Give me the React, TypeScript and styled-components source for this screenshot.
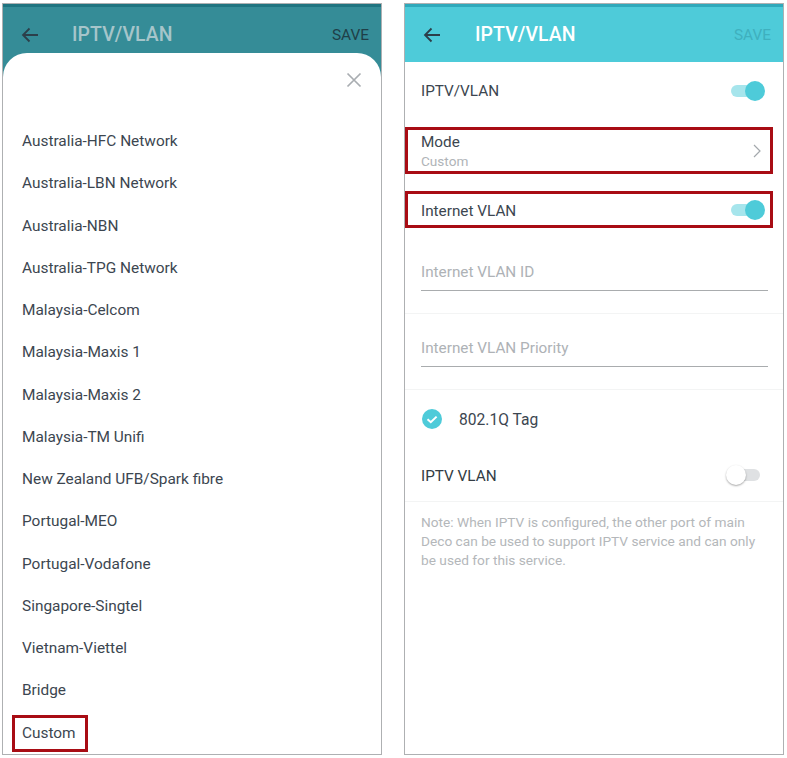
import React from 'react';
import { createGlobalStyle, styled } from 'styled-components';

const modes = [
  'Australia-HFC Network',
  'Australia-LBN Network',
  'Australia-NBN',
  'Australia-TPG Network',
  'Malaysia-Celcom',
  'Malaysia-Maxis 1',
  'Malaysia-Maxis 2',
  'Malaysia-TM Unifi',
  'New Zealand UFB/Spark fibre',
  'Portugal-MEO',
  'Portugal-Vodafone',
  'Singapore-Singtel',
  'Vietnam-Viettel',
  'Bridge',
  'Custom',
];

const GlobalStyle = createGlobalStyle`
  html, body {
    margin: 0;
    background: #fff;
  }
  body {
    font-family: Roboto, "Liberation Sans", sans-serif;
    color: #3c4650;
  }
`;

const BackArrow = () => (
  <svg width="18" height="16" viewBox="0 0 18 16" fill="none" stroke="currentColor" strokeWidth="1.8">
    <path d="M17 8H2M8.5 1.5 2 8l6.5 6.5" />
  </svg>
);

const App: React.FC = () => {
  return (
    <Page>
      <GlobalStyle />
      <Phone>
        <StatusStrip $dim />
        <DimHeader>
          <ArrowSlot>
            <BackArrow />
          </ArrowSlot>
          <Title $dim>IPTV/VLAN</Title>
          <SaveLabel $dim>SAVE</SaveLabel>
        </DimHeader>
        <Sheet>
          <CloseRow>
            <svg width="16" height="16" viewBox="0 0 16 16" stroke="#a9adb1" strokeWidth="1.7">
              <path d="M1.5 1.5 14.5 14.5M14.5 1.5 1.5 14.5" />
            </svg>
          </CloseRow>
          <ModeList>
            {modes.map((mode) => (
              <ModeItem key={mode}>
                <ModeLabel $selected={mode === 'Custom'}>{mode}</ModeLabel>
              </ModeItem>
            ))}
          </ModeList>
        </Sheet>
      </Phone>

      <Phone>
        <StatusStrip />
        <Header>
          <ArrowSlot $wide>
            <BackArrow />
          </ArrowSlot>
          <Title>IPTV/VLAN</Title>
          <SaveLabel>SAVE</SaveLabel>
        </Header>
        <Content>
          <SwitchRow>
            <RowLabel>IPTV/VLAN</RowLabel>
            <Toggle $on />
          </SwitchRow>
          <ModeRow>
            <ModeText>
              <RowLabel>Mode</RowLabel>
              <RowValue>Custom</RowValue>
            </ModeText>
            <svg width="8" height="14" viewBox="0 0 8 14" fill="none" stroke="#a3a8ac" strokeWidth="1.2">
              <path d="M1 1l6 6-6 6" />
            </svg>
          </ModeRow>
          <VlanRow>
            <VlanLabel>Internet VLAN</VlanLabel>
            <Toggle $on />
          </VlanRow>
          <FieldBlock>
            <FieldLabel>Internet VLAN ID</FieldLabel>
          </FieldBlock>
          <FieldBlock>
            <FieldLabel>Internet VLAN Priority</FieldLabel>
          </FieldBlock>
          <TagRow>
            <svg width="20" height="20" viewBox="0 0 20 20">
              <circle cx="10" cy="10" r="10" fill="#4ecbd9" />
              <path d="M5.5 10.2 8.8 13.2 14.6 7.6" fill="none" stroke="#fff" strokeWidth="2" />
            </svg>
            <TagLabel>802.1Q Tag</TagLabel>
          </TagRow>
          <IptvRow>
            <DarkLabel>IPTV VLAN</DarkLabel>
            <Toggle />
          </IptvRow>
          <Note>
            Note: When IPTV is configured, the other port of main Deco can be used to support IPTV
            service and can only be used for this service.
          </Note>
        </Content>
      </Phone>
    </Page>
  );
};

const Page = styled.div`
  width: 787px;
  height: 758px;
  display: flex;
  gap: 22px;
  padding: 3px 0 0 2px;
  box-sizing: border-box;
  overflow: hidden;
`;

const Phone = styled.section`
  width: 380px;
  height: 752px;
  flex: none;
  box-sizing: border-box;
  border: 1px solid #aeb0b2;
  display: flex;
  flex-direction: column;
  position: relative;
  overflow: hidden;
  background: #fff;
`;

const StatusStrip = styled.div<{ $dim?: boolean }>`
  height: 3px;
  flex: none;
  background: ${(p) => (p.$dim ? '#1f7480' : '#2fa9bb')};
`;

const Header = styled.header`
  height: 55px;
  flex: none;
  display: flex;
  align-items: center;
  background: #4ecbd9;
`;

const DimHeader = styled(Header)`
  height: 70px;
  padding-bottom: 15px;
  box-sizing: border-box;
  background: #358c97;
`;

const ArrowSlot = styled.div<{ $wide?: boolean }>`
  width: ${(p) => (p.$wide ? 70 : 69)}px;
  padding-left: 18px;
  box-sizing: border-box;
  display: flex;
  color: #2c3f4a;
`;

const Title = styled.h1<{ $dim?: boolean }>`
  margin: 0;
  flex: 1;
  font-size: 19.4px;
  font-weight: 500;
  letter-spacing: 0.1px;
  color: ${(p) => (p.$dim ? '#a6c5ca' : '#fff')};
`;

const SaveLabel = styled.span<{ $dim?: boolean }>`
  margin-right: 12px;
  font-size: 15.4px;
  color: ${(p) => (p.$dim ? '#1f3f48' : '#3fb0be')};
`;

const Sheet = styled.div`
  flex: 1;
  margin-top: -24px;
  border-radius: 24px 24px 0 0;
  background: #fff;
  position: relative;
`;

const CloseRow = styled.div`
  height: 35px;
  padding: 19px 19px 0 0;
  display: flex;
  justify-content: flex-end;
`;

const ModeList = styled.ul`
  list-style: none;
  margin: 0;
  padding: 13px 0 0 19px;
`;

const ModeItem = styled.li`
  height: 42.25px;
  display: flex;
  align-items: center;
  font-size: 15.4px;
`;

const ModeLabel = styled.span<{ $selected?: boolean }>`
  position: relative;
  &::after {
    content: '';
    display: ${(p) => (p.$selected ? 'block' : 'none')};
    position: absolute;
    left: -10px;
    right: -12px;
    top: -9px;
    bottom: -10px;
    border: 3px solid #a80c14;
  }
`;

const Content = styled.div`
  flex: 1;
  display: flex;
  flex-direction: column;
`;

const SwitchRow = styled.div`
  height: 57px;
  padding: 0 16px;
  display: flex;
  align-items: center;
  justify-content: space-between;
  flex: none;
`;

const HighlightRow = styled(SwitchRow)`
  position: relative;
  &::after {
    content: '';
    position: absolute;
    inset: 0 10px 0 0;
    border: 3px solid #a80c14;
  }
`;

const ModeRow = styled(HighlightRow)`
  height: 47px;
  margin-top: 8px;
  box-sizing: border-box;
  padding-right: 22px;
`;

const ModeText = styled.div`
  padding-top: 1px;
`;

const VlanRow = styled(HighlightRow)`
  height: 37px;
  margin-top: 17px;
`;

const RowLabel = styled.div`
  padding-top: 2px;
  font-size: 15.3px;
  line-height: 19px;
  color: #3c4650;
`;

const VlanLabel = styled(RowLabel)`
  padding-top: 4px;
`;

const RowValue = styled.div`
  font-size: 13.6px;
  line-height: 19px;
  color: #b0b4b8;
`;

const Toggle = styled.span<{ $on?: boolean }>`
  position: relative;
  display: block;
  width: ${(p) => (p.$on ? 33 : 30)}px;
  height: 12px;
  margin-right: ${(p) => (p.$on ? 3 : 7)}px;
  border-radius: 6px;
  background: ${(p) => (p.$on ? '#a6e5ec' : '#dfe1e3')};
  &::after {
    content: '';
    position: absolute;
    top: -4px;
    width: 20px;
    height: 20px;
    border-radius: 50%;
    ${(p) => (p.$on ? 'right: -1px;' : 'left: -4px;')}
    background: ${(p) => (p.$on ? '#4ecbd9' : '#fff')};
    box-shadow: ${(p) => (p.$on ? 'none' : '0 1px 2px rgba(0, 0, 0, 0.35)')};
  }
`;

const FieldBlock = styled.div`
  height: 76px;
  flex: none;
  box-sizing: border-box;
  padding: 13px 0 0 16px;
  border-bottom: 1px solid #f3f4f4;
  &:nth-of-type(4) {
    margin-top: 10px;
  }
`;

const FieldLabel = styled.div`
  width: 347px;
  height: 40px;
  box-sizing: border-box;
  padding-top: 12px;
  font-size: 15.3px;
  line-height: 19px;
  color: #aeb2b6;
  border-bottom: 1px solid #a9acae;
`;

const TagRow = styled.div`
  height: 58px;
  flex: none;
  padding-left: 17px;
  display: flex;
  align-items: center;
  gap: 17px;
`;

const TagLabel = styled.span`
  padding-top: 2px;
  font-size: 15.6px;
  color: #3c4650;
`;

const IptvRow = styled(SwitchRow)`
  height: 53px;
`;

const DarkLabel = styled(RowLabel)`
  padding-top: 4px;
  color: #333c44;
`;

const Note = styled.p`
  margin: 0;
  padding: 11px 20px 0 16px;
  border-top: 1px solid #f3f4f4;
  font-size: 13.7px;
  line-height: 19px;
  color: #b4b7ba;
`;

export default App;
